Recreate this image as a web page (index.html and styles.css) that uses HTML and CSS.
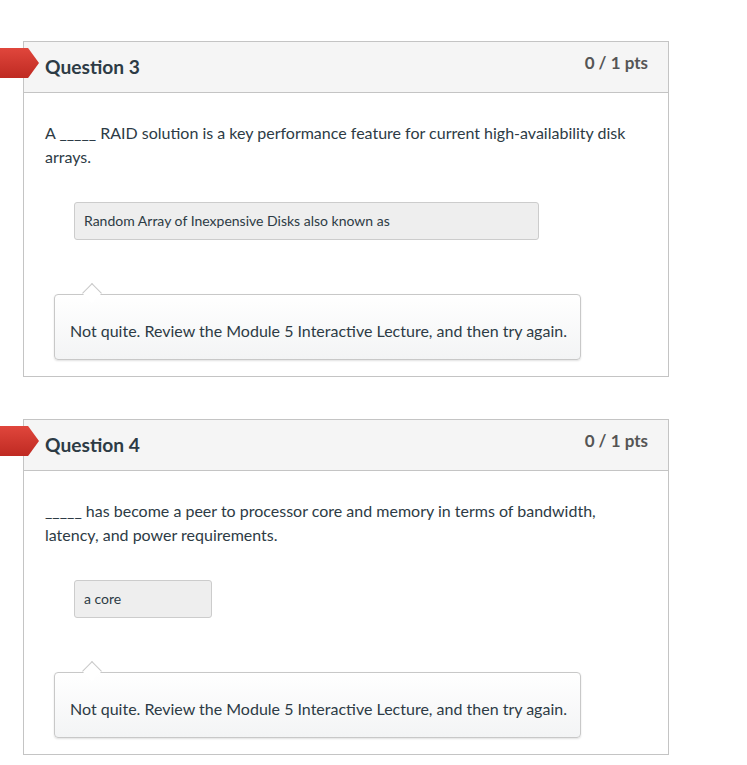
FILE: index.html
```html
<!DOCTYPE html>
<html>
<head>
<meta charset="utf-8">
<link rel="stylesheet" href="styles.css">
</head>
<body>
<div class="quiz">
  <div class="card">
    <div class="flag"></div>
    <div class="card-header">
      <h2 class="q-title">Question 3</h2>
      <div class="q-pts">0 / 1 pts</div>
    </div>
    <div class="card-body">
      <p class="q-text">A _____ RAID solution is a key performance feature for current high-availability disk arrays.</p>
      <div class="answer wide">Random Array of Inexpensive Disks also known as</div>
      <div class="feedback">Not quite. Review the Module 5 Interactive Lecture, and then try again.</div>
    </div>
  </div>
  <div class="card">
    <div class="flag"></div>
    <div class="card-header">
      <h2 class="q-title">Question 4</h2>
      <div class="q-pts">0 / 1 pts</div>
    </div>
    <div class="card-body">
      <p class="q-text">_____ has become a peer to processor core and memory in terms of bandwidth, latency, and power requirements.</p>
      <div class="answer narrow">a core</div>
      <div class="feedback">Not quite. Review the Module 5 Interactive Lecture, and then try again.</div>
    </div>
  </div>
</div>
</body>
</html>
```

FILE: styles.css
```css
* { box-sizing: border-box; }
body {
  margin: 0;
  background: #fff;
  font-family: Lato, "Open Sans", sans-serif;
  color: #2d3b45;
}
.quiz {
  padding: 41px 0 0 23px;
  display: flex;
  flex-direction: column;
  gap: 42px;
}
.card {
  position: relative;
  width: 646px;
  border: 1px solid #c4c4c4;
  background: #fff;
}
.flag {
  position: absolute;
  left: -24px;
  top: 6px;
  width: 39px;
  height: 30px;
  background: linear-gradient(#e0463c, #bf2a22);
  clip-path: polygon(0 0, 72% 0, 100% 50%, 72% 100%, 0 100%);
}
.card-header {
  height: 51px;
  background: #f5f5f5;
  border-bottom: 1px solid #c4c4c4;
  display: flex;
  justify-content: space-between;
  align-items: flex-start;
  padding: 0 20px 0 21px;
}
.q-title {
  margin: 13px 0 0;
  font-size: 19.2px;
  font-weight: 700;
  line-height: 24px;
}
.q-pts {
  margin-top: 11px;
  font-size: 17px;
  font-weight: 700;
  line-height: 20px;
  color: #555;
}
.card-body {
  padding: 28px 21px 16px 21px;
}
.q-text {
  margin: 0;
  font-size: 16px;
  line-height: 24px;
}
.answer {
  margin: 33px 0 0 29px;
  height: 38px;
  background: #eeeeee;
  border: 1px solid #ccc;
  border-radius: 3px;
  font-size: 14px;
  line-height: 36px;
  padding: 0 9px;
}
.answer.wide { width: 465px; }
.answer.narrow { width: 138px; }
.feedback {
  position: relative;
  margin: 54px 0 0 9px;
  width: 527px;
  height: 66px;
  border: 1px solid #c8c8c8;
  border-radius: 4px;
  background: linear-gradient(#fff, #f3f4f5);
  box-shadow: 0 1px 2px rgba(0,0,0,0.12);
  font-size: 16px;
  line-height: 24px;
  white-space: nowrap;
  padding: 24px 10px 0 15px;
}
.feedback::before {
  content: "";
  position: absolute;
  left: 30px;
  top: -9px;
  width: 13px;
  height: 13px;
  background: #fff;
  border-left: 1px solid #c8c8c8;
  border-top: 1px solid #c8c8c8;
  transform: rotate(45deg);
}
```
